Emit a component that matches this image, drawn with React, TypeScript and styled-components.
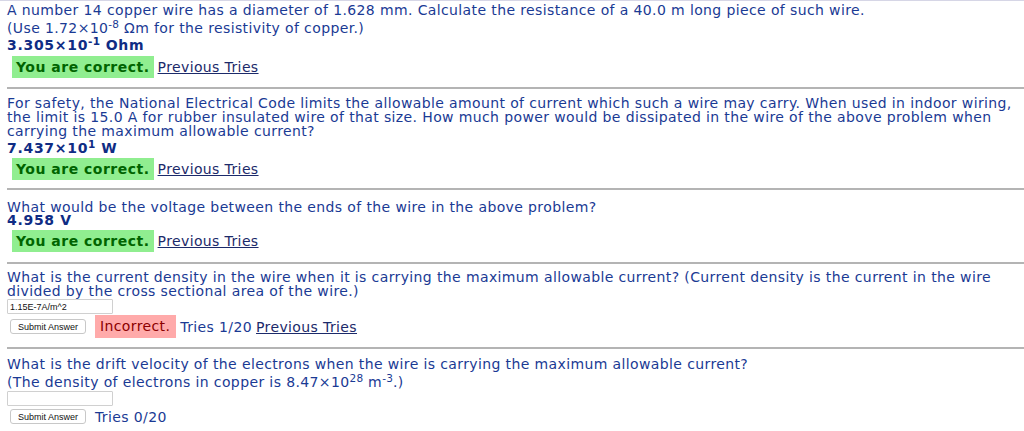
import styled, { createGlobalStyle } from 'styled-components';

const GlobalStyle = createGlobalStyle`
    html, body {
        margin: 0;
        padding: 0;
        background: #ffffff;
        overflow: hidden;
    }
    body {
        font-family: "DejaVu Sans", Verdana, sans-serif;
        font-size: 14px;
        letter-spacing: 0.38px;
        color: #1a3a94;
    }
`;

const Page = styled.div`
    width: 1024px;
    height: 431px;
    border-top: 1px solid #d6d6e6;
    padding-left: 7px;
    box-sizing: border-box;
`;

const Section = styled.div<{ $pad?: number }>`
    padding-top: ${props => props.$pad ?? 0}px;
`;

const Question = styled.div<{ $lh: number }>`
    line-height: ${props => props.$lh}px;
    white-space: nowrap;
`;

const Sup = styled.sup`
    font-size: 10.5px;
    line-height: 0;
    vertical-align: 5px;
    letter-spacing: 0.2px;
`;

const Answer = styled.div<{ $lh?: number }>`
    font-weight: bold;
    letter-spacing: 0.7px;
    color: #0f2c84;
    line-height: ${props => props.$lh ?? 16}px;
`;

const StatusRow = styled.div<{ $mt?: number }>`
    display: flex;
    align-items: center;
    gap: 4px;
    margin-top: ${props => props.$mt ?? 0}px;
    height: 22px;
`;

const Correct = styled.span`
    background: #90ee90;
    color: #006400;
    font-weight: bold;
    letter-spacing: 0.5px;
    padding: 0 4px;
    margin-left: 5px;
    line-height: 22px;
`;

const Incorrect = styled.span`
    background: #ffaaaa;
    color: #8b0000;
    padding: 0 6px 0 5px;
    line-height: 23px;
`;

const Tries = styled.span`
    color: #1a3a94;
`;

const Link = styled.a`
    color: #1c2a6a;
    text-decoration: underline;
    cursor: pointer;
`;

const Divider = styled.div<{ $mt?: number }>`
    height: 2px;
    background: #b4b4b4;
    margin-top: ${props => props.$mt ?? 0}px;
`;

const AnswerInput = styled.input<{ $mt?: number }>`
    display: block;
    width: 106px;
    height: 15px;
    box-sizing: border-box;
    border: 1px solid #d0d0d0;
    border-radius: 1px;
    padding: 0 2px;
    margin: ${props => props.$mt ?? 0}px 0 0 0;
    font-family: "Liberation Sans", Arial, sans-serif;
    font-size: 9px;
    letter-spacing: 0;
    color: #111111;
`;

const SubmitButton = styled.button`
    width: 76px;
    height: 15px;
    margin-left: 3px;
    margin-right: 5px;
    padding: 0;
    background: #ffffff;
    border: 1px solid #c8c8c8;
    border-radius: 3px;
    font-family: "Liberation Sans", Arial, sans-serif;
    font-size: 9px;
    letter-spacing: 0;
    color: #111111;
`;

const SubmitRow = styled.div<{ $mt?: number }>`
    display: flex;
    align-items: center;
    gap: 4px;
    margin-top: ${props => props.$mt ?? 0}px;
    height: 23px;
`;

export default function App() {
    return (
        <Page>
            <GlobalStyle />
            <Section $pad={0}>
                <Question $lh={18}>
                    A number 14 copper wire has a diameter of 1.628 mm. Calculate the resistance of a 40.0 m long piece of such wire.
                    <br />
                    (Use 1.72×10<Sup>-8</Sup> Ωm for the resistivity of copper.)
                </Question>
                <Answer>3.305×10<Sup>-1</Sup> Ohm</Answer>
                <StatusRow $mt={3}>
                    <Correct>You are correct.</Correct>
                    <Link>Previous Tries</Link>
                </StatusRow>
                <Divider $mt={9} />
            </Section>
            <Section $pad={7}>
                <Question $lh={14}>
                    For safety, the National Electrical Code limits the allowable amount of current which such a wire may carry. When used in indoor wiring,
                    <br />
                    the limit is 15.0 A for rubber insulated wire of that size. How much power would be dissipated in the wire of the above problem when
                    <br />
                    carrying the maximum allowable current?
                </Question>
                <Answer $lh={20}>7.437×10<Sup>1</Sup> W</Answer>
                <StatusRow $mt={0}>
                    <Correct>You are correct.</Correct>
                    <Link>Previous Tries</Link>
                </StatusRow>
                <Divider $mt={8} />
            </Section>
            <Section $pad={10}>
                <Question $lh={14}>What would be the voltage between the ends of the wire in the above problem?</Question>
                <Answer $lh={13}>4.958 V</Answer>
                <StatusRow $mt={3}>
                    <Correct>You are correct.</Correct>
                    <Link>Previous Tries</Link>
                </StatusRow>
                <Divider $mt={10} />
            </Section>
            <Section $pad={6}>
                <Question $lh={14}>
                    What is the current density in the wire when it is carrying the maximum allowable current? (Current density is the current in the wire
                    <br />
                    divided by the cross sectional area of the wire.)
                </Question>
                <AnswerInput $mt={1} defaultValue="1.15E-7A/m^2" />
                <SubmitRow $mt={1}>
                    <SubmitButton>Submit Answer</SubmitButton>
                    <Incorrect>Incorrect.</Incorrect>
                    <Tries>Tries 1/20</Tries>
                    <Link>Previous Tries</Link>
                </SubmitRow>
                <Divider $mt={9} />
            </Section>
            <Section $pad={6}>
                <Question $lh={18}>
                    What is the drift velocity of the electrons when the wire is carrying the maximum allowable current?
                    <br />
                    (The density of electrons in copper is 8.47×10<Sup>28</Sup> m<Sup>-3</Sup>.)
                </Question>
                <AnswerInput />
                <SubmitRow $mt={-1}>
                    <SubmitButton>Submit Answer</SubmitButton>
                    <Tries>Tries 0/20</Tries>
                </SubmitRow>
            </Section>
        </Page>
    );
}
